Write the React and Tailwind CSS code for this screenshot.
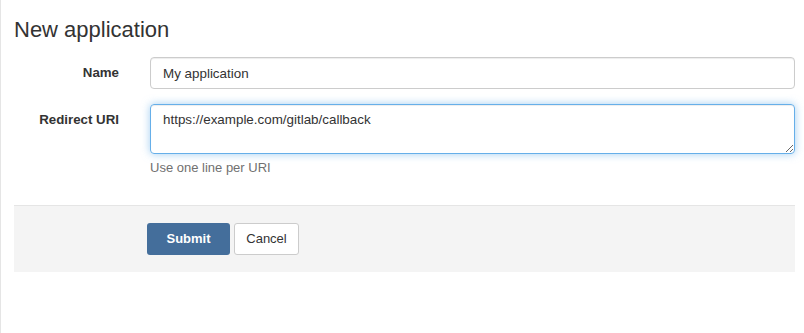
import React, { useEffect, useRef } from 'react'

const App = () => {
  const areaRef = useRef(null)
  useEffect(() => {
    const el = areaRef.current
    if (el) {
      el.focus()
      el.setSelectionRange(el.value.length, el.value.length)
    }
  }, [])

  return (
    <div className="min-h-[333px] w-[804px] bg-white border-l border-[#e5e5e5] font-['Liberation_Sans',Arial,sans-serif] text-[#333]">
      <div className="pl-[13px] pr-[9px] pt-[18px]">
        <h1 className="text-[22px] leading-[24px] font-normal">New application</h1>

        <form className="mt-[15px]" onSubmit={(e) => e.preventDefault()}>
          {/* name */}
          <div className="flex items-start">
            <label className="w-[105px] pt-[7px] text-right text-[13.3px] leading-[18px] font-bold">Name</label>
            <div className="ml-[31px] flex-1">
              <input
                type="text"
                defaultValue="My application"
                className="block w-full h-[32px] px-[12px] text-[13.4px] text-[#333] border border-[#ccc] rounded-[4px] outline-none shadow-[inset_0_1px_1px_rgba(0,0,0,0.075)]"
              />
            </div>
          </div>

          {/* redirect uri */}
          <div className="flex items-start mt-[15px]">
            <label className="w-[105px] pt-[7px] text-right text-[13.3px] leading-[18px] font-bold">Redirect URI</label>
            <div className="ml-[31px] flex-1">
              <textarea
                ref={areaRef}
                defaultValue="https://example.com/gitlab/callback"
                className="block w-full h-[50px] px-[12px] py-[6px] text-[13.4px] leading-[18px] text-[#333] border border-[#66afe9] rounded-[4px] outline-none shadow-[inset_0_1px_1px_rgba(0,0,0,0.075),0_0_8px_rgba(102,175,233,0.6)]"
              />
              <p className="mt-[5px] text-[13px] leading-[18px] text-[#707070]">Use one line per URI</p>
            </div>
          </div>

          {/* actions */}
          <div className="mt-[28px] h-[67px] bg-[#f4f4f4] border-t border-[#e5e5e5] pl-[133px] pt-[17px] flex items-start gap-[4px]">
            <button type="submit" className="w-[83px] h-[32px] bg-[#446e9b] text-white text-[13px] font-bold rounded-[3px]">Submit</button>
            <button type="button" className="w-[65px] h-[32px] bg-white border border-[#ccc] text-[#333] text-[13px] rounded-[3px]">Cancel</button>
          </div>
        </form>
      </div>
    </div>
  )
}

export default App
